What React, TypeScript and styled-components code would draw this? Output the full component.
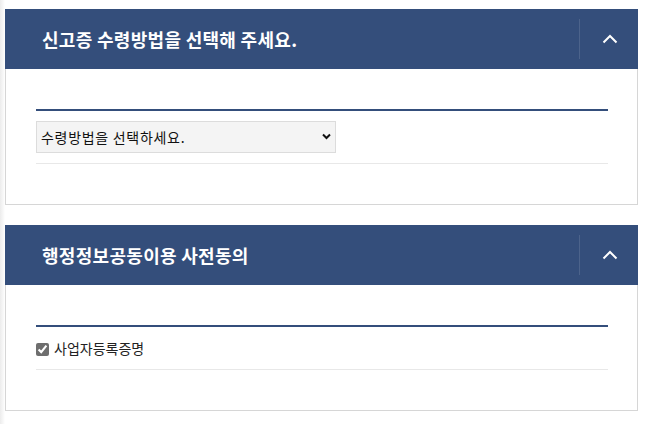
import React from 'react';
import styled, { createGlobalStyle } from 'styled-components';

const navy = '#344e7b';

const GlobalStyle = createGlobalStyle`
  html, body {
    margin: 0;
    padding: 0;
    background: #fff;
  }
  body {
    font-family: "Noto Sans CJK KR", "Noto Sans", sans-serif;
    color: #222;
  }
`;

const Page = styled.div`
  display: flex;
  flex-direction: column;
  gap: 20px;
  padding: 9px 10px 14px 5px;
  background: linear-gradient(to right, #ececec 0, #f7f7f7 3px, #fff 5px);
`;

const Panel = styled.section`
  display: flex;
  flex-direction: column;
  background: #fff;
`;

const Header = styled.div`
  display: flex;
  align-items: center;
  height: 60px;
  background: ${navy};
`;

const Title = styled.h2`
  flex: 1;
  margin: 0;
  padding-left: 37px;
  font-size: 18px;
  font-weight: 700;
  color: #fff;
  letter-spacing: 0.3px;
`;

const Toggle = styled.button`
  position: relative;
  display: flex;
  align-items: center;
  justify-content: center;
  width: 59px;
  height: 60px;
  padding: 0 0 0 3px;
  border: 0;
  background: transparent;
  cursor: pointer;

  &::before {
    content: '';
    position: absolute;
    left: 0;
    top: 10px;
    bottom: 10px;
    width: 1px;
    background: rgba(255, 255, 255, 0.12);
  }
`;

const Body = styled.div`
  padding: 40px 29px 40px 30px;
  border: 1px solid #d6d6d6;
  border-top: 0;
`;

const List = styled.div`
  border-top: 2px solid ${navy};
`;

const Row = styled.div`
  display: flex;
  align-items: center;
  padding: 10px 0;
  border-bottom: 1px solid #e8e8e8;
`;

const SelectWrap = styled.div`
  position: relative;
  width: 300px;
  height: 32px;
`;

const Select = styled.select`
  appearance: none;
  width: 100%;
  height: 100%;
  margin: 0;
  padding: 0 24px 0 4px;
  border: 1px solid #dcdcdc;
  border-radius: 0;
  background: #f4f4f4;
  font-family: "Noto Sans CJK KR", sans-serif;
  font-size: 14px;
  letter-spacing: 0.7px;
  color: #111;
  outline: none;
`;

const Arrow = styled.svg`
  position: absolute;
  right: 5px;
  top: 12px;
  pointer-events: none;
`;

const CheckLabel = styled.label`
  display: flex;
  align-items: center;
  gap: 5px;
  font-size: 14px;
  line-height: 22px;
  color: #222;
`;

const Check = styled.input`
  width: 13px;
  height: 13px;
  margin: 3px 0 0 0;
  accent-color: #6e6e6e;
`;

function Chevron() {
  return (
    <svg width="16" height="10" viewBox="0 0 16 10" aria-hidden="true">
      <path d="M1.5 8.5 L8 2 L14.5 8.5" fill="none" stroke="#fff" strokeWidth="2" />
    </svg>
  );
}

function AccordionPanel({ title, children }: { title: string; children: React.ReactNode }) {
  return (
    <Panel>
      <Header>
        <Title>{title}</Title>
        <Toggle aria-label="접기">
          <Chevron />
        </Toggle>
      </Header>
      <Body>
        <List>{children}</List>
      </Body>
    </Panel>
  );
}

export default function App(): JSX.Element {
  return (
    <>
      <GlobalStyle />
      <Page>
        <AccordionPanel title="신고증 수령방법을 선택해 주세요.">
          <Row>
            <SelectWrap>
              <Select defaultValue="">
                <option value="">수령방법을 선택하세요.</option>
                <option value="visit">방문수령</option>
                <option value="mail">우편수령</option>
              </Select>
              <Arrow width="9" height="7" viewBox="0 0 9 7">
                <path d="M1 1.5 L4.5 5 L8 1.5" fill="none" stroke="#111" strokeWidth="2" />
              </Arrow>
            </SelectWrap>
          </Row>
        </AccordionPanel>
        <AccordionPanel title="행정정보공동이용 사전동의">
          <Row>
            <CheckLabel>
              <Check type="checkbox" defaultChecked />
              사업자등록증명
            </CheckLabel>
          </Row>
        </AccordionPanel>
      </Page>
    </>
  );
}
